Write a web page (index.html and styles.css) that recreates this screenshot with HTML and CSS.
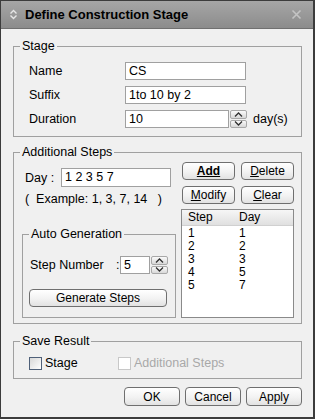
FILE: index.html
```html
<!DOCTYPE html>
<html lang="en">
<head>
  <meta charset="UTF-8">
  <title>Define Construction Stage</title>
  <link rel="stylesheet" href="styles.css">
</head>
<body>
  <div class="window">
    <div class="titlebar">
      <svg class="sys-icon" width="9" height="11" viewBox="0 0 9 11">
        <path d="M1.5 4.5 L4.5 1.5 L7.5 4.5 M1.5 6.5 L4.5 9.5 L7.5 6.5" fill="none" stroke="#e6e6e6" stroke-width="1.4"/>
      </svg>
      <span class="title">Define Construction Stage</span>
      <svg class="close" width="11" height="11" viewBox="0 0 11 11">
        <path d="M1.5 1.5 L9.5 9.5 M9.5 1.5 L1.5 9.5" stroke="#c4c4c4" stroke-width="1.6"/>
      </svg>
    </div>

    <div class="content">
      <fieldset class="group">
        <legend>Stage</legend>
        <div class="stage-body">
          <div class="field-row">
            <span class="field-label">Name</span>
            <div class="input wide">CS</div>
          </div>
          <div class="field-row">
            <span class="field-label">Suffix</span>
            <div class="input wide">1to 10 by 2</div>
          </div>
          <div class="field-row">
            <span class="field-label">Duration</span>
            <div class="input duration">10</div>
            <div class="spin">
              <span class="spin-btn"><svg width="9" height="5" viewBox="0 0 9 5"><path d="M1 4.5 L4.5 1 L8 4.5" fill="none" stroke="#303030" stroke-width="1.3"/></svg></span>
              <span class="spin-btn"><svg width="9" height="5" viewBox="0 0 9 5"><path d="M1 0.5 L4.5 4 L8 0.5" fill="none" stroke="#303030" stroke-width="1.3"/></svg></span>
            </div>
            <span class="unit">day(s)</span>
          </div>
        </div>
      </fieldset>

      <fieldset class="group steps">
        <legend>Additional Steps</legend>
        <div class="steps-body">
          <div class="steps-left">
            <div class="day-row">
              <span class="day-label">Day :</span>
              <div class="input day">1 2 3 5 7</div>
            </div>
            <div class="example">(&nbsp; Example: 1, 3, 7, 14 &nbsp;&nbsp;)</div>

            <fieldset class="group auto">
              <legend>Auto Generation</legend>
              <div class="auto-body">
                <div class="step-row">
                  <span class="step-label">Step Number</span>
                  <span class="colon">:</span>
                  <div class="input step">5</div>
                  <div class="spin">
                    <span class="spin-btn"><svg width="9" height="5" viewBox="0 0 9 5"><path d="M1 4.5 L4.5 1 L8 4.5" fill="none" stroke="#303030" stroke-width="1.3"/></svg></span>
                    <span class="spin-btn"><svg width="9" height="5" viewBox="0 0 9 5"><path d="M1 0.5 L4.5 4 L8 0.5" fill="none" stroke="#303030" stroke-width="1.3"/></svg></span>
                  </div>
                </div>
                <button class="btn generate">Generate Steps</button>
              </div>
            </fieldset>
          </div>

          <div class="steps-right">
            <div class="btn-grid">
              <button class="btn default"><u>Add</u></button>
              <button class="btn"><u>D</u>elete</button>
              <button class="btn"><u>M</u>odify</button>
              <button class="btn"><u>C</u>lear</button>
            </div>
            <div class="list">
              <div class="list-head">
                <span class="col-step">Step</span>
                <span class="col-day">Day</span>
              </div>
              <div class="list-rows">
                <div class="list-row"><span class="col-step">1</span><span class="col-day">1</span></div>
                <div class="list-row"><span class="col-step">2</span><span class="col-day">2</span></div>
                <div class="list-row"><span class="col-step">3</span><span class="col-day">3</span></div>
                <div class="list-row"><span class="col-step">4</span><span class="col-day">5</span></div>
                <div class="list-row"><span class="col-step">5</span><span class="col-day">7</span></div>
              </div>
            </div>
          </div>
        </div>
      </fieldset>

      <fieldset class="group save">
        <legend>Save Result</legend>
        <div class="save-body">
          <label class="check first"><span class="box"></span>Stage</label>
          <label class="check disabled"><span class="box"></span>Additional Steps</label>
        </div>
      </fieldset>

      <div class="actions">
        <button class="btn action">OK</button>
        <button class="btn action">Cancel</button>
        <button class="btn action">Apply</button>
      </div>
    </div>
  </div>
</body>
</html>
```

FILE: styles.css
```css
* {
  margin: 0;
  padding: 0;
  box-sizing: border-box;
}

body {
  margin: 0;
  background: #f0f0f0;
  font-family: "Liberation Sans", Arial, sans-serif;
  font-size: 12.5px;
  color: #000;
}

.window {
  width: 315px;
  height: 419px;
  border: 1px solid #3c3c3c;
  border-right-width: 2px;
  border-bottom-width: 2px;
  background: #f0f0f0;
  display: flex;
  flex-direction: column;
}

/* title bar */
.titlebar {
  height: 28px;
  flex: none;
  display: flex;
  align-items: center;
  padding-left: 8px;
  padding-right: 11px;
  background: linear-gradient(#a6a6a6, #8c8c8c);
  border-bottom: 1px solid #707070;
}

.sys-icon {
  flex: none;
}

.title {
  margin-left: 7px;
  font-size: 13px;
  font-weight: bold;
  flex: 1;
}

.close {
  flex: none;
}

/* dialog content */
.content {
  flex: 1;
  display: flex;
  flex-direction: column;
  padding: 10px 11px 0 12px;
}

.group {
  border: 1px solid #a0a0a0;
  padding: 0;
}

.group legend {
  margin-left: 6px;
  padding: 0 2px;
  line-height: 14px;
}

.input {
  height: 18px;
  border: 1px solid #a0a0a0;
  background: #fff;
  padding: 0 3px;
  line-height: 16px;
  white-space: nowrap;
}

/* stage */
.stage-body {
  padding: 9px 0 8px 15px;
  display: flex;
  flex-direction: column;
  gap: 6px;
}

.field-row {
  display: flex;
  align-items: center;
  height: 18px;
}

.field-label {
  width: 96px;
}

.input.wide {
  width: 121px;
}

.input.duration {
  width: 104px;
}

.spin {
  width: 17px;
  height: 18px;
  margin-left: 1px;
  display: flex;
  flex-direction: column;
  gap: 1px;
}

.spin-btn {
  flex: 1;
  display: flex;
  align-items: center;
  justify-content: center;
  border: 1px solid #a8a8a8;
  border-radius: 2px;
  background: linear-gradient(#fafafa, #d8d8d8);
}

.unit {
  margin-left: 6px;
}

/* additional steps */
.steps {
  margin-top: 8px;
}

.steps-body {
  display: flex;
  gap: 5px;
  padding: 3px 7px 5px 8px;
}

.steps-left {
  width: 154px;
  display: flex;
  flex-direction: column;
}

.day-row {
  display: flex;
  align-items: center;
  margin-top: 6px;
  margin-left: 3px;
}

.day-label {
  width: 36px;
}

.input.day {
  width: 110px;
  height: 19px;
  line-height: 17px;
}

.example {
  margin-top: 5px;
  margin-left: 3px;
  line-height: 14px;
  white-space: nowrap;
}

.auto {
  margin-top: 21px;
}

.auto-body {
  padding: 15px 0 10px 6px;
  display: flex;
  flex-direction: column;
}

.step-row {
  display: flex;
  align-items: center;
  margin-left: 1px;
}

.step-label {
  width: 86px;
}

.colon {
  width: 4px;
}

.input.step {
  width: 30px;
}

.btn {
  font-family: inherit;
  font-size: 12px;
  height: 18px;
  border: 1px solid #6f6f6f;
  border-radius: 4px;
  background: linear-gradient(#ffffff, #f2f2f2 55%, #e2e2e2);
  color: #000;
  line-height: 14px;
}

.btn u {
  text-decoration: underline;
}

.btn.default {
  font-weight: bold;
}

.generate {
  margin-top: 15px;
  width: 138px;
}

.steps-right {
  width: 113px;
  display: flex;
  flex-direction: column;
}

.btn-grid {
  display: grid;
  grid-template-columns: 53px 53px;
  column-gap: 6px;
  row-gap: 6px;
  margin-left: 1px;
}

.list {
  margin-top: 5px;
  height: 109px;
  border: 1px solid #8a8a8a;
  background: #fff;
}

.list-head {
  display: flex;
  height: 16px;
  line-height: 15px;
  background: linear-gradient(#f6f6f6, #e0e0e0);
  border-bottom: 1px solid #d0d0d0;
  font-size: 12px;
}

.col-step {
  width: 57px;
  padding-left: 6px;
}

.list-rows {
  padding-top: 1px;
}

.list-row {
  display: flex;
  height: 13px;
  line-height: 13px;
  font-size: 12px;
}

/* save result */
.save {
  margin-top: 10px;
}

.save-body {
  display: flex;
  padding: 9px 0 8px 15px;
}

.check {
  display: flex;
  align-items: center;
  height: 13px;
  line-height: 13px;
}

.check.first {
  width: 89px;
}

.box {
  width: 13px;
  height: 13px;
  margin-right: 3px;
  border: 1px solid #4f6079;
  background: linear-gradient(135deg, #d8d8d8, #ffffff);
}

.check.disabled {
  color: #a8a8a8;
}

.check.disabled .box {
  border-color: #c8c8c8;
  background: #fff;
}

/* bottom buttons */
.actions {
  display: flex;
  justify-content: flex-end;
  gap: 5px;
  margin-top: 8px;
}

.btn.action {
  width: 56px;
  height: 19px;
}
```
